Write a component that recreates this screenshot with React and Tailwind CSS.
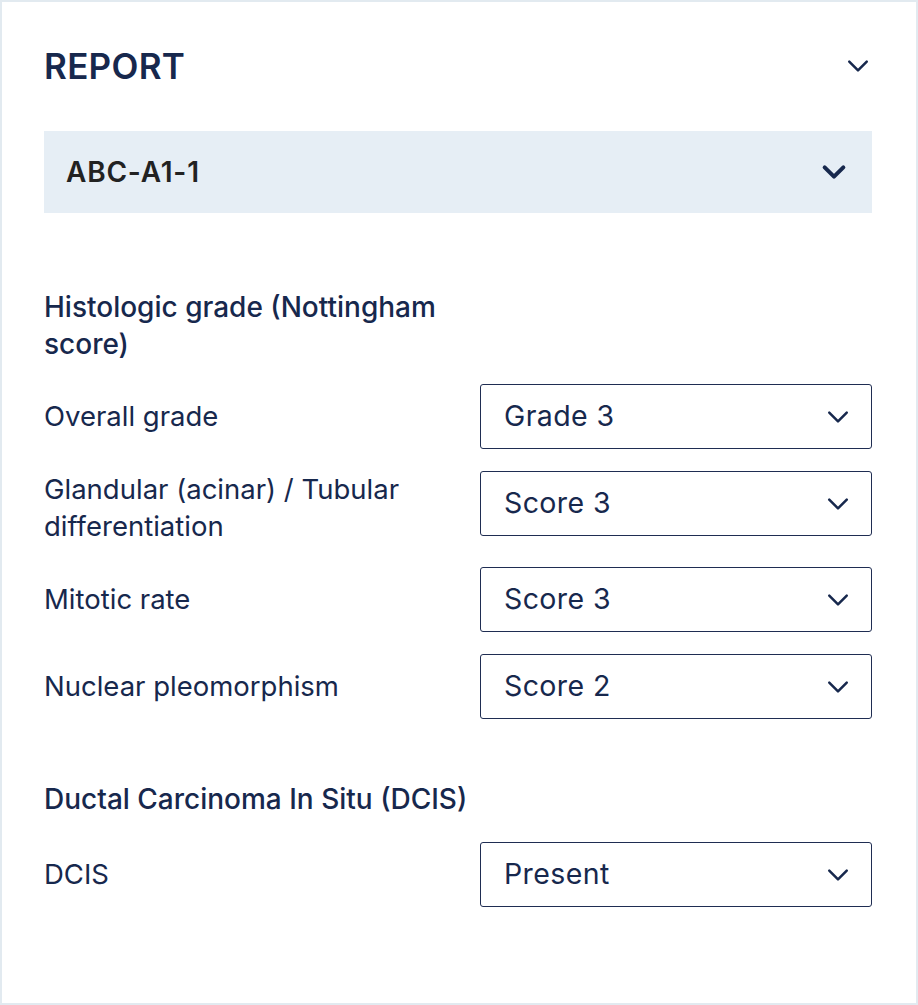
import React from "react";

const navy = "text-[#17284d]";

function Chevron({ className = "", strokeWidth = 2 }) {
  return (
    <svg viewBox="0 0 24 24" className={className} fill="none" stroke="currentColor" strokeWidth={strokeWidth} strokeLinecap="round" strokeLinejoin="round">
      <path d="M5 8.5l7 7 7-7" />
    </svg>
  );
}

function Select({ value }) {
  return (
    <div className="w-[392px] h-[65px] shrink-0 flex items-center justify-between border border-[#1f2d52] rounded-[3px] pl-[23px] pr-[18px] bg-white">
      <span className="text-[28.5px] text-[#17284d] tracking-[0.4px]">{value}</span>
      <Chevron className="w-[30px] h-[30px] text-[#17284d]" strokeWidth={2} />
    </div>
  );
}

function Row({ label, value, top }) {
  return (
    <div className={`flex ${top ? "items-start" : "items-center"}`}>
      <div className={`flex-1 pr-4 text-[27.5px] leading-[37px] ${navy}`}>{label}</div>
      <Select value={value} />
    </div>
  );
}

export default function App() {
  return (
    <div className="w-[918px] h-[1005px] bg-white border-2 border-[#e2eaf0] pl-[42px] pr-[44px] font-['Inter',sans-serif]">
      {/* header */}
      <div className="flex items-center justify-between pt-[44px] h-[84px]">
        <h1 className={`text-[35px] font-semibold leading-[40px] tracking-[0.3px] ${navy}`}>REPORT</h1>
        <Chevron className="w-[30px] h-[30px] mr-[-1px] text-[#17284d]" strokeWidth={2} />
      </div>

      {/* case selector */}
      <div className="mt-[45px] h-[82px] bg-[#e6eef5] flex items-center justify-between pl-[22px] pr-[22px]">
        <span className="text-[28px] font-semibold text-[#222] tracking-[0.8px]">ABC-A1-1</span>
        <Chevron className="w-[32px] h-[32px] text-[#17284d]" strokeWidth={3} />
      </div>

      {/* histologic grade */}
      <div className="mt-[76px] w-[436px]">
        <h2 className={`text-[28px] leading-[37px] font-medium ${navy}`}>Histologic grade (Nottingham score)</h2>
      </div>
      <div className="mt-[21px] flex flex-col gap-[22px]">
        <Row label="Overall grade" value="Grade 3" />
        <Row label="Glandular (acinar) / Tubular differentiation" value="Score 3" top />
        <Row label="Mitotic rate" value="Score 3" />
        <Row label="Nuclear pleomorphism" value="Score 2" />
      </div>

      {/* dcis */}
      <h2 className={`mt-[62px] text-[28px] leading-[37px] font-medium ${navy}`}>Ductal Carcinoma In Situ (DCIS)</h2>
      <div className="mt-[24px]">
        <Row label="DCIS" value="Present" />
      </div>
    </div>
  );
}
